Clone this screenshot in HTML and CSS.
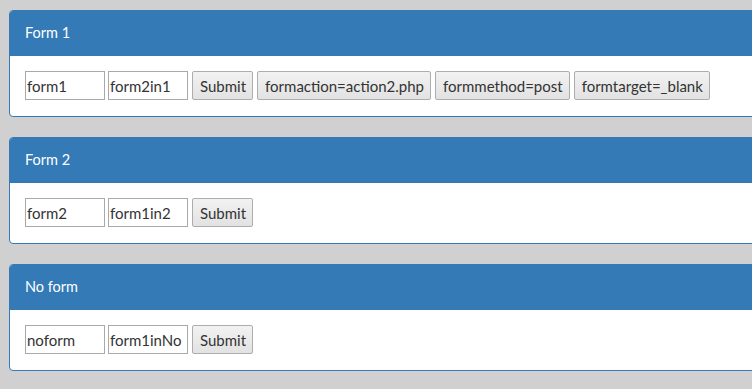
FILE: index.html
```html
<!DOCTYPE html>
<html>
<head>
<meta charset="utf-8">
<link rel="stylesheet" href="styles.css">
</head>
<body>
<div class="page">
  <div class="panel">
    <div class="panel-heading">Form 1</div>
    <div class="panel-body">
      <input class="field" type="text" value="form1">
      <input class="field" type="text" value="form2in1">
      <button class="btn">Submit</button>
      <button class="btn">formaction=action2.php</button>
      <button class="btn">formmethod=post</button>
      <button class="btn">formtarget=_blank</button>
    </div>
  </div>
  <div class="panel">
    <div class="panel-heading">Form 2</div>
    <div class="panel-body">
      <input class="field" type="text" value="form2">
      <input class="field" type="text" value="form1in2">
      <button class="btn">Submit</button>
    </div>
  </div>
  <div class="panel">
    <div class="panel-heading">No form</div>
    <div class="panel-body">
      <input class="field" type="text" value="noform">
      <input class="field" type="text" value="form1inNo">
      <button class="btn">Submit</button>
    </div>
  </div>
</div>
</body>
</html>
```

FILE: styles.css
```css
html, body {
  margin: 0;
  padding: 0;
  background: #d0d0d0;
  overflow: hidden;
}
.page {
  padding: 10px 0 0 9px;
  width: 780px;
  display: flex;
  flex-direction: column;
  gap: 20px;
  font-family: Lato, "Open Sans", sans-serif;
}
.panel {
  border: 1px solid #337ab7;
  border-radius: 4px;
  background: #fff;
  overflow: hidden;
}
.panel-heading {
  background: #337ab7;
  color: #fff;
  height: 45px;
  line-height: 44px;
  padding: 0 15px;
  font-size: 14.5px;
}
.panel-body {
  padding: 15px 15px 16px;
  display: flex;
  gap: 4px;
  align-items: center;
}
.field {
  box-sizing: border-box;
  width: 80px;
  height: 29px;
  margin: 0;
  border: 1px solid #a9a9a9;
  padding: 0 1px;
  font-family: Lato, "Open Sans", sans-serif;
  font-size: 15px;
  color: #333;
  background: #fff;
}
.field + .field {
  margin-left: -1px;
}
.btn {
  box-sizing: border-box;
  height: 29px;
  margin: 0;
  padding: 0 6px 0 7px;
  border: 1px solid #adadad;
  border-radius: 2px;
  background: linear-gradient(#f2f2f2, #e2e2e2);
  font-family: Lato, "Open Sans", sans-serif;
  font-size: 15px;
  color: #333;
}
```
